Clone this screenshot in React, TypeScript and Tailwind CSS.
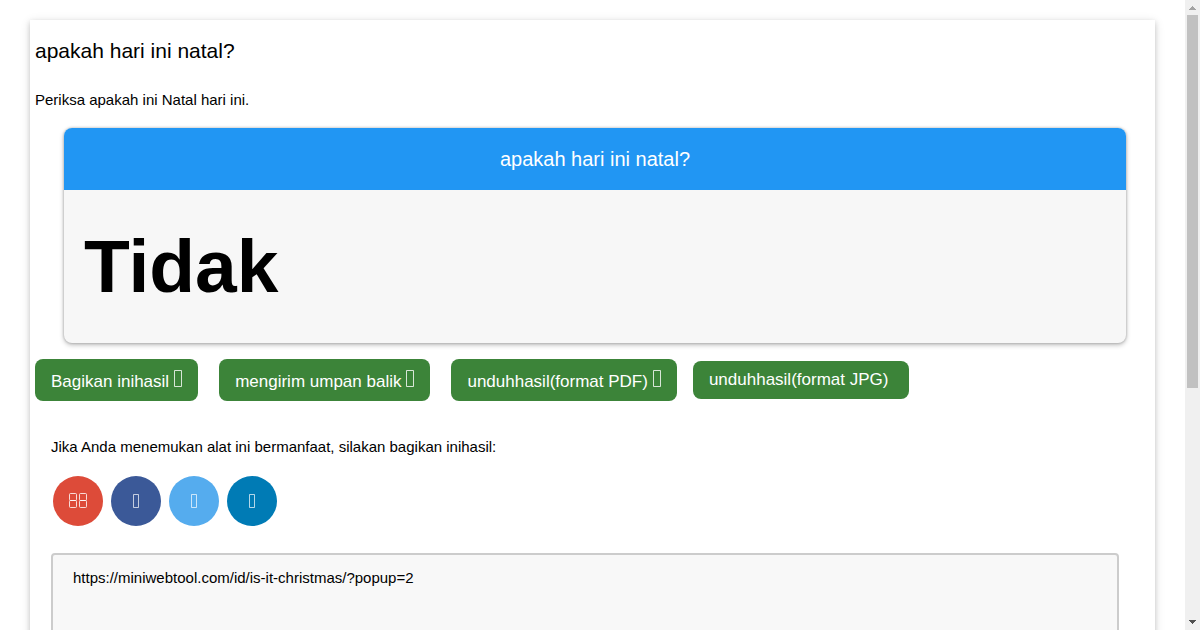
import React from 'react';

const actions = [
  { label: 'Bagikan inihasil', icon: true, className: 'mr-[21px] h-[42px] pt-[3px]' },
  { label: 'mengirim umpan balik', icon: true, className: 'mr-[21px] h-[42px] pt-[3px]' },
  { label: 'unduhhasil(format PDF)', icon: true, className: 'mr-4 h-[42px] pt-[3px]' },
  { label: 'unduhhasil(format JPG)', icon: false, className: 'h-[38px]' },
];

const networks = [
  { name: 'Google+', color: 'bg-[#dd4b39]' },
  { name: 'Facebook', color: 'bg-[#3b5998]' },
  { name: 'Twitter', color: 'bg-[#55acee]' },
  { name: 'LinkedIn', color: 'bg-[#007bb5]' },
];

function ButtonGlyph() {
  return (
    <svg className="-mt-[6px] ml-[5px] shrink-0" width="8" height="17" viewBox="0 0 8 17" fill="none" stroke="#fff" strokeOpacity="0.8" aria-hidden="true">
      <path d="M.5.5h7v16h-7z" />
    </svg>
  );
}

function SocialGlyph() {
  return (
    <svg width="6" height="14" viewBox="0 0 6 14" fill="none" stroke="#fff" strokeOpacity="0.7" aria-hidden="true">
      <path d="M.5.5h5v13h-5z" />
    </svg>
  );
}

function GoogleGlyph() {
  return (
    <svg className="-mt-px" width="18" height="15" viewBox="0 0 18 15" fill="none" stroke="#fff" strokeOpacity="0.8" aria-hidden="true">
      <rect x=".5" y=".5" width="7" height="7" rx="1" />
      <rect x=".5" y="7.5" width="7" height="7" rx="1" />
      <rect x="10.5" y=".5" width="7" height="7" rx="1" />
      <rect x="10.5" y="7.5" width="7" height="7" rx="1" />
    </svg>
  );
}

function Scrollbar() {
  return (
    <div className="flex w-[15px] shrink-0 flex-col items-center bg-[#f0f0f0]" aria-hidden="true">
      <svg className="shrink-0" width="15" height="15" viewBox="0 0 15 15" shapeRendering="crispEdges">
        <path d="M7 6h1v1h1v1h1v1h1v1H4V9h1V8h1V7h1z" fill="#a3a3a3" />
      </svg>
      <div className="h-[373px] w-[11px] bg-[#c1c1c1]" />
      <svg className="mt-auto shrink-0" width="15" height="15" viewBox="0 0 15 15" shapeRendering="crispEdges">
        <path d="M4 5h7v1h-1v1H9v1H8v1H7V8H6V7H5V6H4z" fill="#505050" />
      </svg>
    </div>
  );
}

export default function App() {
  return (
    <div className="flex h-screen bg-white font-['Liberation_Sans',Arial,sans-serif] text-[15px] leading-[22px] text-black">
      <div className="min-w-0 flex-1 overflow-hidden pt-5">
        <main className="mx-[30px] min-h-screen px-[5px] pb-8 pt-4 shadow-[0_2px_5px_0_rgba(0,0,0,0.16),0_2px_10px_0_rgba(0,0,0,0.12)]">
          <h1 className="text-[21px] leading-[30px]">apakah hari ini natal?</h1>
          <p className="mt-[23px]">Periksa apakah ini Natal hari ini.</p>

          <section className="ml-[29px] mr-6 mt-[17px] overflow-hidden rounded-lg bg-[#f7f7f7] shadow-[0_2px_5px_0_rgba(0,0,0,0.26),0_0_2px_1px_rgba(0,0,0,0.12)]">
            <h2 className="bg-[#2196f3] py-4 text-center text-xl leading-[30px] text-white">apakah hari ini natal?</h2>
            <div className="px-5 pb-[26px] pt-[26px]">
              <strong className="block text-[75px] leading-[101px]">Tidak</strong>
            </div>
          </section>

          <div className="mt-4 flex items-center">
            {actions.map((action) => (
              <button
                key={action.label}
                type="button"
                className={`flex shrink-0 cursor-pointer items-center whitespace-nowrap rounded-lg bg-[#3c8439] px-4 text-[17px] leading-[26px] text-white ${action.className}`}
              >
                {action.label}
                {action.icon ? <ButtonGlyph /> : <span className="w-[5px]" />}
              </button>
            ))}
          </div>

          <div className="pl-4 pr-[31px]">
            <label htmlFor="share-url" className="mt-[35px] block">
              Jika Anda menemukan alat ini bermanfaat, silakan bagikan inihasil:
            </label>
            <div className="mx-0.5 mt-[18px] flex gap-2">
              {networks.map((network) => (
                <a
                  key={network.name}
                  href="#share"
                  aria-label={network.name}
                  className={`flex size-[50px] items-center justify-center rounded-full ${network.color}`}
                >
                  {network.name === 'Google+' ? <GoogleGlyph /> : <SocialGlyph />}
                </a>
              ))}
            </div>
            <textarea
              id="share-url"
              readOnly
              defaultValue="https://miniwebtool.com/id/is-it-christmas/?popup=2"
              className="mt-[27px] block h-[150px] w-full resize-none rounded-sm border-2 border-[#ccc] bg-[#f8f8f8] px-5 py-3 text-[15px]"
            />
          </div>
        </main>
      </div>
      <Scrollbar />
    </div>
  );
}
